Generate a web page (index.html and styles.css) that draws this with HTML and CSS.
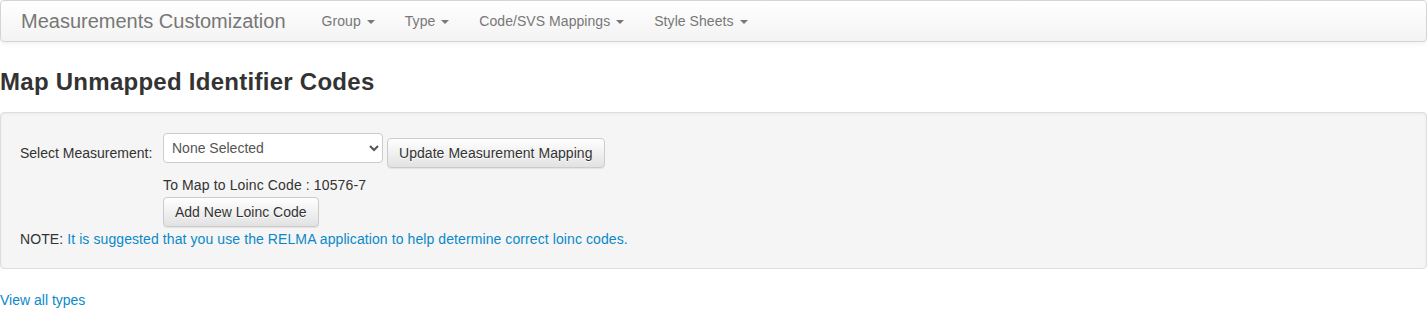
FILE: index.html
```html
<!DOCTYPE html>
<html lang="en">
<head>
    <meta charset="UTF-8">
    <title>Map Unmapped Identifier Codes</title>
    <link rel="stylesheet" href="styles.css">
</head>
<body>
<nav class="navbar">
    <a class="navbar-brand" href="#">Measurements Customization</a>
    <ul class="nav-menu">
        <li><a href="#">Group <span class="caret"></span></a></li>
        <li><a href="#">Type <span class="caret"></span></a></li>
        <li><a href="#">Code/SVS Mappings <span class="caret"></span></a></li>
        <li><a href="#">Style Sheets <span class="caret"></span></a></li>
    </ul>
</nav>

<h2 class="page-title">Map Unmapped Identifier Codes</h2>

<div class="well">
    <div class="form-row">
        <label class="form-label" for="measurement">Select Measurement:</label>
        <select id="measurement" class="form-select">
            <option>None Selected</option>
        </select>
        <button class="btn btn-update">Update Measurement Mapping</button>
    </div>
    <div class="form-indent">
        <div class="loinc-text">To Map to Loinc Code : 10576-7</div>
        <button class="btn">Add New Loinc Code</button>
    </div>
    <div class="note">NOTE: <span class="note-text">It is suggested that you use the RELMA application to help determine correct loinc codes.</span></div>
</div>

<a class="view-all" href="#">View all types</a>
</body>
</html>
```

FILE: styles.css
```css
body {
    margin: 0;
    font-family: "Liberation Sans", Arial, sans-serif;
    font-size: 14px;
    line-height: 20px;
    color: #333;
    background: #fff;
}

a {
    text-decoration: none;
}

/* top bar */
.navbar {
    display: flex;
    align-items: center;
    height: 40px;
    border: 1px solid #d4d4d4;
    border-radius: 4px;
    background: linear-gradient(to bottom, #fff 0%, #f3f3f3 100%);
    box-shadow: inset 0 1px 0 rgba(255, 255, 255, 0.15), 0 1px 5px rgba(0, 0, 0, 0.075);
}

.navbar-brand {
    margin-left: 20px;
    font-size: 20px;
    color: #777;
    line-height: 40px;
}

.nav-menu {
    display: flex;
    list-style: none;
    margin: 0 0 0 21px;
    padding: 0;
    letter-spacing: 0.06px;
}

.nav-menu a {
    display: block;
    padding: 0 15px;
    line-height: 40px;
    color: #777;
}

.caret {
    display: inline-block;
    width: 0;
    height: 0;
    margin-left: 2px;
    vertical-align: middle;
    border-top: 4px solid;
    border-right: 4px solid transparent;
    border-left: 4px solid transparent;
}

.page-title {
    margin: 27px 0 17px;
    font-size: 24px;
    line-height: 26px;
    font-weight: bold;
    letter-spacing: 0.27px;
}

/* form box */
.well {
    padding: 20px 19px 19px;
    background: #f5f5f5;
    border: 1px solid #dedede;
    border-radius: 4px;
    box-shadow: inset 0 1px 3px rgba(0, 0, 0, 0.05);
}

.form-row {
    display: flex;
    align-items: flex-start;
}

.form-label {
    width: 143px;
    padding-top: 10px;
}

.form-select {
    width: 220px;
    height: 30px;
    padding: 0 4px;
    font-family: inherit;
    font-size: 14px;
    color: #555;
    background: #fff;
    border: 1px solid #ccc;
    border-radius: 4px;
}

.btn {
    padding: 4px 11px;
    font-family: inherit;
    font-size: 14px;
    line-height: 20px;
    color: #333;
    text-shadow: 0 1px 0 #fff;
    background: linear-gradient(to bottom, #fff 0%, #e2e2e2 100%);
    border: 1px solid #ccc;
    border-radius: 4px;
    box-shadow: inset 0 1px 0 rgba(255, 255, 255, 0.15), 0 1px 1px rgba(0, 0, 0, 0.075);
    cursor: pointer;
}

.btn-update {
    margin: 5px 0 0 4px;
    letter-spacing: 0.05px;
}

.form-indent {
    padding-left: 143px;
    margin-top: 7px;
}

.loinc-text {
    margin-bottom: 2px;
    letter-spacing: 0.13px;
}

.note {
    margin-top: 2px;
    letter-spacing: 0.09px;
}

.note-text {
    color: #0a88c9;
}

.view-all {
    display: inline-block;
    margin-top: 21px;
    color: #0a88c9;
}
```
